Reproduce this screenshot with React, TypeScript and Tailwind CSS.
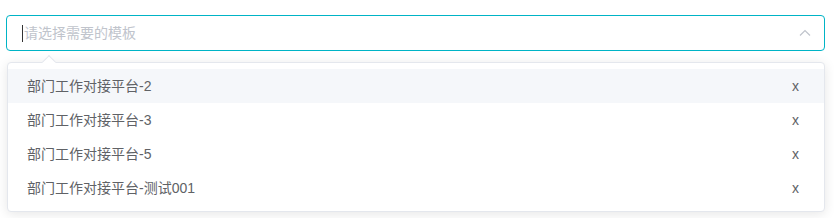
const TEMPLATES = [
  '部门工作对接平台-2',
  '部门工作对接平台-3',
  '部门工作对接平台-5',
  '部门工作对接平台-测试001',
];

export default function App() {
  return (
    <div
      className="w-[834px] h-[218px] bg-white overflow-hidden pl-[6px] pr-[9px] pt-[15px]"
      style={{ fontFamily: '"Liberation Sans", "Noto Sans CJK SC", sans-serif' }}
    >
      {/* Select input */}
      <div className="h-[36px] border border-[#00b4c6] rounded-[4px] flex items-center pl-[15px] pr-[12px]">
        <div className="flex-1 flex items-center text-[14px] text-[#c0c4cc]">
          <span className="w-px h-[17px] bg-[#333] mr-px" />
          请选择需要的模板
        </div>
        <svg width="12" height="8" viewBox="0 0 12 8" className="mr-px">
          <path d="M1 6.5 L6 1.5 L11 6.5" fill="none" stroke="#c0c4cc" strokeWidth="1.2" />
        </svg>
      </div>

      {/* Dropdown */}
      <div className="relative mt-[11px] ml-px border border-[#e4e7ed] rounded-[4px] bg-white shadow-[0_2px_12px_0_rgba(0,0,0,0.1)] py-[6px]">
        <div className="absolute -top-[6px] left-[36px] w-[10px] h-[10px] bg-white border-l border-t border-[#e4e7ed] rotate-45" />
        {TEMPLATES.map((name, i) => (
          <div
            key={name}
            className={`relative h-[34px] flex items-center justify-between pl-[19px] pr-[25px] text-[14px] text-[#606266] ${
              i === 0 ? 'bg-[#f5f7fa]' : ''
            }`}
          >
            <span>{name}</span>
            <span className="text-[#606266]">x</span>
          </div>
        ))}
      </div>
    </div>
  );
}
